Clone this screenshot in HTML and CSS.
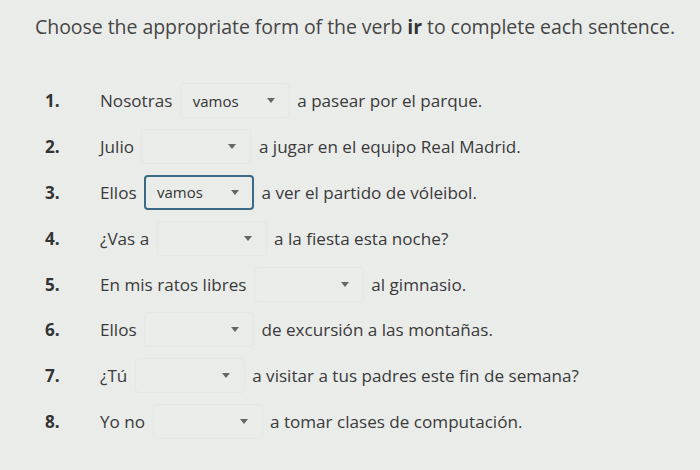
FILE: index.html
```html
<!DOCTYPE html>
<html lang="en">
<head>
<meta charset="utf-8">
<title>Ir</title>
<link rel="stylesheet" href="styles.css">
</head>
<body>
<div class="page">
  <p class="title">Choose the appropriate form of the verb <b>ir</b> to complete each sentence.</p>
  <ol class="rows">
    <li class="row"><span class="num">1.</span><span class="sent">Nosotras <span class="drop"><span class="val">vamos</span><span class="arrow"></span></span> a pasear por el parque.</span></li>
    <li class="row"><span class="num">2.</span><span class="sent">Julio <span class="drop"><span class="val"></span><span class="arrow"></span></span> a jugar en el equipo Real Madrid.</span></li>
    <li class="row"><span class="num">3.</span><span class="sent">Ellos <span class="drop focus"><span class="val">vamos</span><span class="arrow"></span></span> a ver el partido de vóleibol.</span></li>
    <li class="row"><span class="num">4.</span><span class="sent">¿Vas a <span class="drop"><span class="val"></span><span class="arrow"></span></span> a la fiesta esta noche?</span></li>
    <li class="row"><span class="num">5.</span><span class="sent">En mis ratos libres <span class="drop"><span class="val"></span><span class="arrow"></span></span> al gimnasio.</span></li>
    <li class="row"><span class="num">6.</span><span class="sent">Ellos <span class="drop"><span class="val"></span><span class="arrow"></span></span> de excursión a las montañas.</span></li>
    <li class="row"><span class="num">7.</span><span class="sent">¿Tú <span class="drop"><span class="val"></span><span class="arrow"></span></span> a visitar a tus padres este fin de semana?</span></li>
    <li class="row"><span class="num">8.</span><span class="sent">Yo no <span class="drop"><span class="val"></span><span class="arrow"></span></span> a tomar clases de computación.</span></li>
  </ol>
</div>
</body>
</html>
```
FILE: styles.css
```css
html, body {
  margin: 0;
  padding: 0;
  background: #eaecea;
}
.page {
  width: 700px;
  height: 470px;
  box-sizing: border-box;
  padding: 13px 0 0 35px;
  font-family: "Open Sans", "DejaVu Sans", sans-serif;
  color: #3a3a3a;
}
.title {
  margin: 0;
  font-size: 19.5px;
  line-height: 28px;
  color: #454545;
  letter-spacing: -0.05px;
}
.title b {
  font-weight: 700;
  color: #333;
}
.rows {
  list-style: none;
  margin: 37px 0 0 0;
  padding: 0 0 0 10px;
}
.row {
  display: flex;
  align-items: center;
  height: 45.8px;
  font-size: 17.1px;
}
.num {
  width: 55px;
  font-weight: 700;
  color: #333;
}
.sent {
  display: flex;
  align-items: center;
  white-space: pre;
}
.drop {
  display: inline-flex;
  align-items: center;
  justify-content: space-between;
  width: 110px;
  height: 35px;
  box-sizing: border-box;
  margin: 0 3px;
  padding: 0 14px 0 12px;
  border: 1px solid #e5e7e5;
  border-radius: 4px;
}
.drop.focus {
  border: 2px solid #3a6a86;
  padding: 0 13px 0 11px;
}
.val {
  font-size: 15px;
  color: #333;
}
.arrow {
  width: 0;
  height: 0;
  border-left: 4.5px solid transparent;
  border-right: 4.5px solid transparent;
  border-top: 5px solid #666;
}
```
